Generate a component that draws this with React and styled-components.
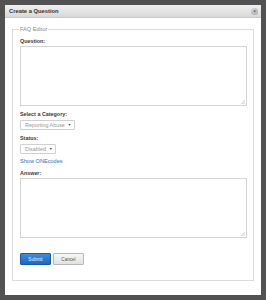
import styled, { createGlobalStyle } from 'styled-components';

const GlobalStyle = createGlobalStyle`
	html, body {
		margin: 0;
		padding: 0;
		background: #525252;
		font-family: "Liberation Sans", Arial, sans-serif;
	}
`;

const Page = styled.div`
	width: 266px;
	height: 300px;
	padding: 5px;
	box-sizing: border-box;
	background: #525252;
`;

const Dialog = styled.div`
	width: 256px;
	height: 290px;
	background: #fff;
	display: flex;
	flex-direction: column;
	box-sizing: border-box;
`;

const TitleBar = styled.div`
	height: 13px;
	flex-shrink: 0;
	display: flex;
	align-items: center;
	justify-content: space-between;
	padding: 0 3px 0 4px;
	background: linear-gradient(#f0f0f0, #d9d9d9);
	border-bottom: 1px solid #c8c8c8;
	box-sizing: border-box;
`;

const Title = styled.span`
	font-size: 5.8px;
	font-weight: bold;
	color: #333;
`;

const CloseButton = styled.span`
	width: 7px;
	height: 7px;
	border-radius: 50%;
	background: radial-gradient(circle at 40% 35%, #d8dde4, #9aa3ad);
	display: flex;
	align-items: center;
	justify-content: center;
	font-size: 5px;
	line-height: 1;
	color: #333;
`;

const Body = styled.div`
	flex: 1;
	padding: 8px 7px 14px 7px;
	display: flex;
	flex-direction: column;
`;

const Fieldset = styled.fieldset`
	margin: 0;
	padding: 6px 6px 15px 7px;
	border: 1px solid #dcdcdc;
	flex: 1;
	display: flex;
	flex-direction: column;
	min-width: 0;
`;

const Legend = styled.legend`
	font-size: 5.6px;
	color: #8a8a8a;
	padding: 0 1px;
	margin-left: -1px;
	line-height: 6px;
`;

const Label = styled.div`
	font-size: 5.4px;
	font-weight: bold;
	color: #3a3a3a;
	line-height: 7px;
	margin-top: ${p => p.$top || 0}px;
	margin-bottom: 1px;
`;

const TextArea = styled.div`
	height: 60px;
	border: 1px solid #d4d4d4;
	box-sizing: border-box;
	position: relative;
	background: #fff;
`;

const Grip = styled.svg`
	position: absolute;
	right: 1px;
	bottom: 1px;
`;

const Select = styled.div`
	align-self: flex-start;
	height: 10px;
	box-sizing: border-box;
	border: 1px solid #d0d0d0;
	border-radius: 1px;
	display: flex;
	align-items: center;
	gap: 3px;
	padding: 0 3px 0 4px;
	margin-top: 1px;
	font-size: 5.4px;
	color: #999;
`;

const Caret = styled.span`
	font-size: 3.5px;
	color: #444;
`;

const Link = styled.a`
	font-size: 5.6px;
	color: #2a74c6;
	line-height: 7px;
	margin-top: 4px;
	text-decoration: none;
`;

const Buttons = styled.div`
	display: flex;
	gap: 2px;
	margin-top: 15px;
`;

const Button = styled.button`
	width: 31px;
	height: 12px;
	padding: 0;
	font-family: inherit;
	font-size: 4.6px;
	border-radius: 1px;
	color: ${p => (p.$primary ? '#e8f0fb' : '#555')};
	background: ${p => (p.$primary ? 'linear-gradient(#3c8de0, #1c68c0)' : 'linear-gradient(#f7f7f7, #e2e2e2)')};
	border: 1px solid ${p => (p.$primary ? '#1a5aa8' : '#b8b8b8')};
`;

const ResizeGrip = () => (
	<Grip width="4" height="4" viewBox="0 0 4 4">
		<path d="M4 0 L0 4 M4 1.5 L1.5 4 M4 3 L3 4" stroke="#aaa" strokeWidth="0.5" />
	</Grip>
);

export default function App() {
	return (
		<>
			<GlobalStyle />
			<Page>
				<Dialog>
					<TitleBar>
						<Title>Create a Question</Title>
						<CloseButton>×</CloseButton>
					</TitleBar>
					<Body>
						<Fieldset>
							<Legend>FAQ Editor</Legend>
							<Label>Question:</Label>
							<TextArea><ResizeGrip /></TextArea>
							<Label $top={5}>Select a Category:</Label>
							<Select>Reporting Abuse <Caret>▼</Caret></Select>
							<Label $top={5}>Status:</Label>
							<Select>Disabled <Caret>▼</Caret></Select>
							<Link href="#">Show ONEcodes</Link>
							<Label $top={5}>Answer:</Label>
							<TextArea><ResizeGrip /></TextArea>
							<Buttons>
								<Button $primary>Submit</Button>
								<Button>Cancel</Button>
							</Buttons>
						</Fieldset>
					</Body>
				</Dialog>
			</Page>
		</>
	);
}
